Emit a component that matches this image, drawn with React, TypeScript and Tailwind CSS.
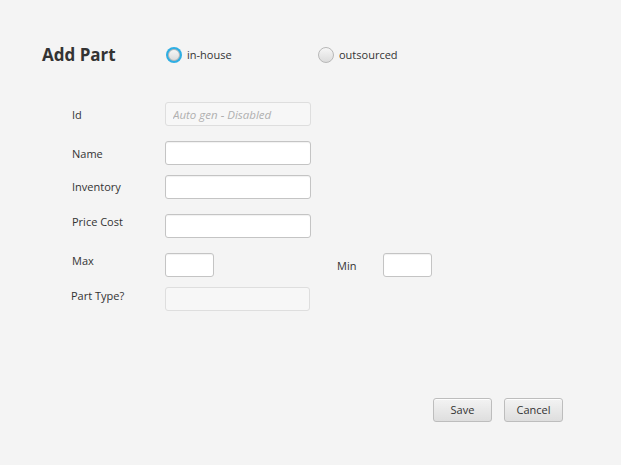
import React from "react";

const font = { fontFamily: '"Open Sans", "Noto Sans", sans-serif' };

function Radio({ label, focused }: { label: string; focused?: boolean }) {
  return (
    <label className="flex items-center gap-[5px] text-[11px] text-[#333333]">
      <span
        className={
          focused
            ? "flex h-[16px] w-[16px] items-center justify-center rounded-full bg-[#2eaee3] p-[2px]"
            : "flex h-[16px] w-[16px] items-center justify-center rounded-full"
        }
      >
        <span className="block h-full w-full rounded-full border border-[#b8b8b8] bg-gradient-to-b from-[#f6f6f6] to-[#dcdcdc]" />
      </span>
      <span>{label}</span>
    </label>
  );
}

function Field({
  width = "w-[146px]",
  disabled,
  placeholder,
}: {
  width?: string;
  disabled?: boolean;
  placeholder?: string;
}) {
  return (
    <input
      disabled={disabled}
      placeholder={placeholder}
      className={
        (disabled
          ? "border-[#dedede] bg-[#f7f7f7] placeholder:text-[#b0b0b0] "
          : "border-[#c4c4c4] bg-white shadow-[inset_0_1px_1px_rgba(0,0,0,0.06)] ") +
        width +
        " h-[24px] shrink-0 rounded-[3px] border px-[7px] text-[11.5px] italic outline-none"
      }
      style={font}
    />
  );
}

export default function App() {
  return (
    <div className="h-[465px] w-[621px] bg-[#f4f4f4] pt-[43px]" style={font}>
      <div className="flex h-[24px] items-center pl-[42px]">
        <h1 className="w-[124px] text-[17px] font-bold text-[#333333]">Add Part</h1>
        <div className="w-[152px]">
          <Radio label="in-house" focused />
        </div>
        <Radio label="outsourced" />
      </div>

      <div className="mt-[35px] flex flex-col pl-[72px] text-[11px] text-[#333333]">
        <div className="flex h-[24px] items-center">
          <span className="w-[93px] shrink-0 pt-[2px]">Id</span>
          <Field disabled placeholder="Auto gen - Disabled" />
        </div>
        <div className="mt-[15px] flex h-[24px] items-center">
          <span className="w-[93px] shrink-0 pt-[2px]">Name</span>
          <Field />
        </div>
        <div className="mt-[10px] flex h-[24px] items-center">
          <span className="w-[93px] shrink-0">Inventory</span>
          <Field />
        </div>
        <div className="mt-[15px] flex h-[24px] items-center">
          <span className="-mt-[8px] w-[93px] shrink-0">Price Cost</span>
          <Field />
        </div>
        <div className="mt-[15px] flex h-[24px] items-center">
          <span className="-mt-[8px] w-[93px] shrink-0">Max</span>
          <Field width="w-[49px]" />
          <span className="ml-[123px] w-[46px] shrink-0 pt-[2px]">Min</span>
          <Field width="w-[49px]" />
        </div>
        <div className="-ml-[1px] mt-[10px] flex h-[24px] items-center">
          <span className="-mt-[6px] w-[94px] shrink-0">Part Type?</span>
          <Field width="w-[145px]" disabled />
        </div>
      </div>

      <div className="mt-[87px] flex justify-end gap-[12px] pr-[58px]">
        <button className="h-[24px] w-[59px] rounded-[3px] border border-[#bdbdbd] bg-gradient-to-b from-[#f3f3f3] to-[#dedede] text-[11px] text-[#333333] shadow-[inset_0_1px_0_rgba(255,255,255,0.8)]">
          Save
        </button>
        <button className="h-[24px] w-[59px] rounded-[3px] border border-[#bdbdbd] bg-gradient-to-b from-[#f3f3f3] to-[#dedede] text-[11px] text-[#333333] shadow-[inset_0_1px_0_rgba(255,255,255,0.8)]">
          Cancel
        </button>
      </div>
    </div>
  );
}
